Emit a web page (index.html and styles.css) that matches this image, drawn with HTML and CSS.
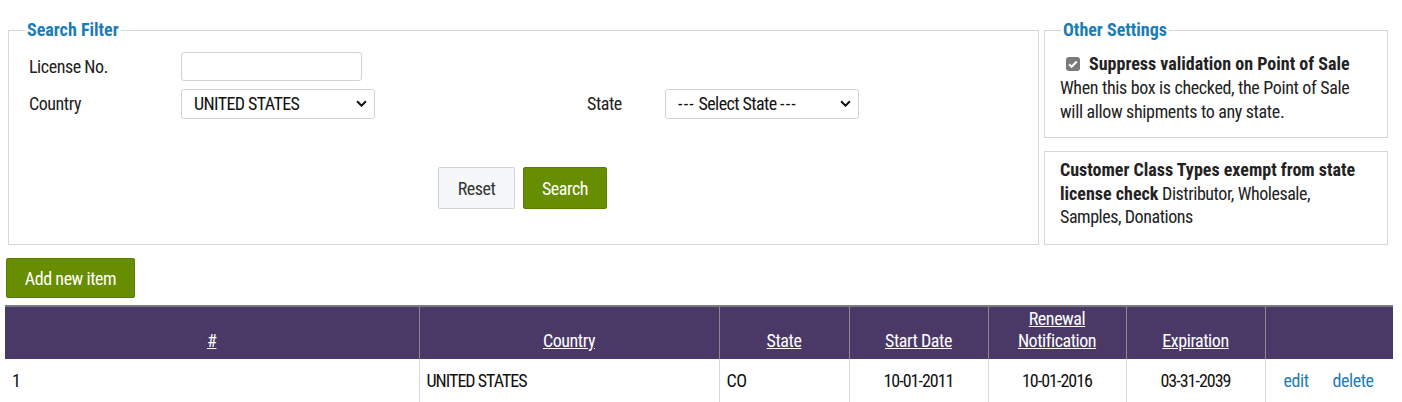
FILE: index.html
```html
<!DOCTYPE html>
<html>
<head>
<meta charset="utf-8">
<link rel="stylesheet" href="styles.css">
</head>
<body>
<div class="top">
  <fieldset class="box search">
    <legend>Search Filter</legend>
    <div class="frow">
      <label class="lbl">License No.</label>
      <input class="inp" type="text">
    </div>
    <div class="frow">
      <label class="lbl">Country</label>
      <div class="sel w194"><span>UNITED STATES</span><svg viewBox="0 0 10 6" class="chev"><path d="M1 1l4 4 4-4" fill="none" stroke="#111" stroke-width="1.8"/></svg></div>
      <label class="lbl state">State</label>
      <div class="sel w194"><span><span class="dash">---</span> Select State <span class="dash">---</span></span><svg viewBox="0 0 10 6" class="chev"><path d="M1 1l4 4 4-4" fill="none" stroke="#111" stroke-width="1.8"/></svg></div>
    </div>
    <div class="btns">
      <button class="btn reset">Reset</button>
      <button class="btn green">Search</button>
    </div>
  </fieldset>
  <div class="side">
    <fieldset class="box other">
      <legend>Other Settings</legend>
      <div class="chk"><span class="cb"><svg viewBox="0 0 14 14"><path d="M3.2 7.2l2.5 2.5 5-5.2" fill="none" stroke="#fff" stroke-width="2"/></svg></span><b>Suppress validation on Point of Sale</b></div>
      <div class="desc">When this box is checked, the Point of Sale will allow shipments to any state.</div>
    </fieldset>
    <div class="box exempt"><b>Customer Class Types exempt from state license check</b> Distributor, Wholesale, Samples, Donations</div>
  </div>
</div>
<button class="btn green add">Add new item</button>
<table class="grid">
  <thead>
    <tr>
      <th class="c1"><a>#</a></th>
      <th class="c2"><a>Country</a></th>
      <th class="c3"><a>State</a></th>
      <th class="c4"><a>Start Date</a></th>
      <th class="c5"><a>Renewal<br>Notification</a></th>
      <th class="c6"><a>Expiration</a></th>
      <th class="c7"></th>
    </tr>
  </thead>
  <tbody>
    <tr>
      <td>1</td>
      <td class="up">UNITED STATES</td>
      <td>CO</td>
      <td class="ctr num">10-01-2011</td>
      <td class="ctr num">10-01-2016</td>
      <td class="ctr num">03-31-2039</td>
      <td class="acts"><a>edit</a><a>delete</a></td>
    </tr>
  </tbody>
</table>
</body>
</html>
```
FILE: styles.css
```css
* { box-sizing: border-box; }
body {
  margin: 0;
  padding: 0;
  font-family: "Roboto Condensed", "Liberation Sans Narrow", "Roboto", sans-serif;
  font-size: 18px;
  letter-spacing: -0.45px;
  color: #222;
  background: #fff;
}
b, legend { letter-spacing: 0; }
.top {
  display: flex;
  gap: 5px;
  padding: 20px 0 0 8px;
}
.box {
  border: 1px solid #d3d8de;
  margin: 0;
}
fieldset.box { padding: 0; }
legend {
  color: #1a7db6;
  font-weight: bold;
  font-size: 18px;
  padding: 0 2px;
  line-height: 20px;
}
.search {
  width: 1031px;
  height: 225px;
  padding: 8px 0 0 20px !important;
}
.search legend { margin-left: -4px; }
.frow {
  display: flex;
  align-items: center;
  height: 37px;
}
.lbl { width: 152px; }
.lbl.state { width: 78px; margin-left: 212px; }
.inp {
  width: 181px;
  height: 29px;
  border: 1px solid #ced4da;
  border-radius: 3px;
}
.sel {
  height: 30px;
  border: 1px solid #ced4da;
  border-radius: 3px;
  display: flex;
  align-items: center;
  justify-content: space-between;
  padding: 0 7px 0 12px;
  color: #111;
}
.sel > span { letter-spacing: -0.6px; }
.sel .dash { letter-spacing: 1.2px; }
.w194 { width: 194px; }
.chev { width: 11px; height: 7px; }
.btns {
  display: flex;
  gap: 8px;
  margin: 45px 0 0 409px;
}
.btn {
  font-family: inherit;
  font-size: 18px;
  letter-spacing: -0.45px;
  height: 42px;
  border: 1px solid #ccd2d8;
  border-radius: 2px;
  padding: 0;
  cursor: pointer;
}
.reset { background: #f6f7f9; color: #333; width: 77px; }
.green { background: #678d00; color: #fff; border-color: #5b7d00; width: 84px; }
.side {
  width: 344px;
  display: flex;
  flex-direction: column;
  gap: 13px;
}
.other {
  height: 118px;
  padding: 12px 15px 0 15px !important;
}
.other legend { margin-left: 1px; }
.chk { display: flex; align-items: center; gap: 9px; line-height: 24px; padding-left: 6px; }
.cb {
  flex: none;
  width: 14px; height: 14px;
  background: #7a7a7a;
  border-radius: 3px;
  display: inline-flex;
}
.cb svg { width: 14px; height: 14px; }
.desc { line-height: 24px; letter-spacing: -0.35px; margin-right: 10px; }
.exempt {
  height: 94px;
  padding: 6px 15px;
  line-height: 23.5px;
}
.add {
  display: block;
  margin: 13px 0 0 6px;
  width: 129px;
  height: 40px;
  padding: 0;
}
.grid {
  margin: 7px 0 0 5px;
  width: 1388px;
  border-collapse: collapse;
  border-top: 2px solid #7a7a80;
}
.grid th {
  background: #4a3966;
  color: #fff;
  font-weight: normal;
  vertical-align: bottom;
  height: 53px;
  padding: 0 4px 7px;
  line-height: 22px;
  border-left: 1px solid #8a8a90;
}
.grid th:first-child { border-left: none; }
.grid th a { text-decoration: underline; }
.grid td {
  height: 44px;
  padding: 0 7px 1px;
  border-left: 1px solid #d3d8de;
  color: #111;
}
.grid td.up { letter-spacing: -1px; }
.grid td.num { letter-spacing: -1px; }
.grid td:first-child { border-left: none; padding-left: 7px; }
.c1 { width: 414px; }
.c2 { width: 300px; }
.c3 { width: 130px; }
.c4 { width: 139px; }
.c5 { width: 138px; }
.c6 { width: 139px; }
.c7 { width: 128px; }
.ctr { text-align: center; }
.acts a { color: #1a7db6; margin-left: 11px; margin-right: 24px; }
.acts a:last-child { margin: 0; }
```
